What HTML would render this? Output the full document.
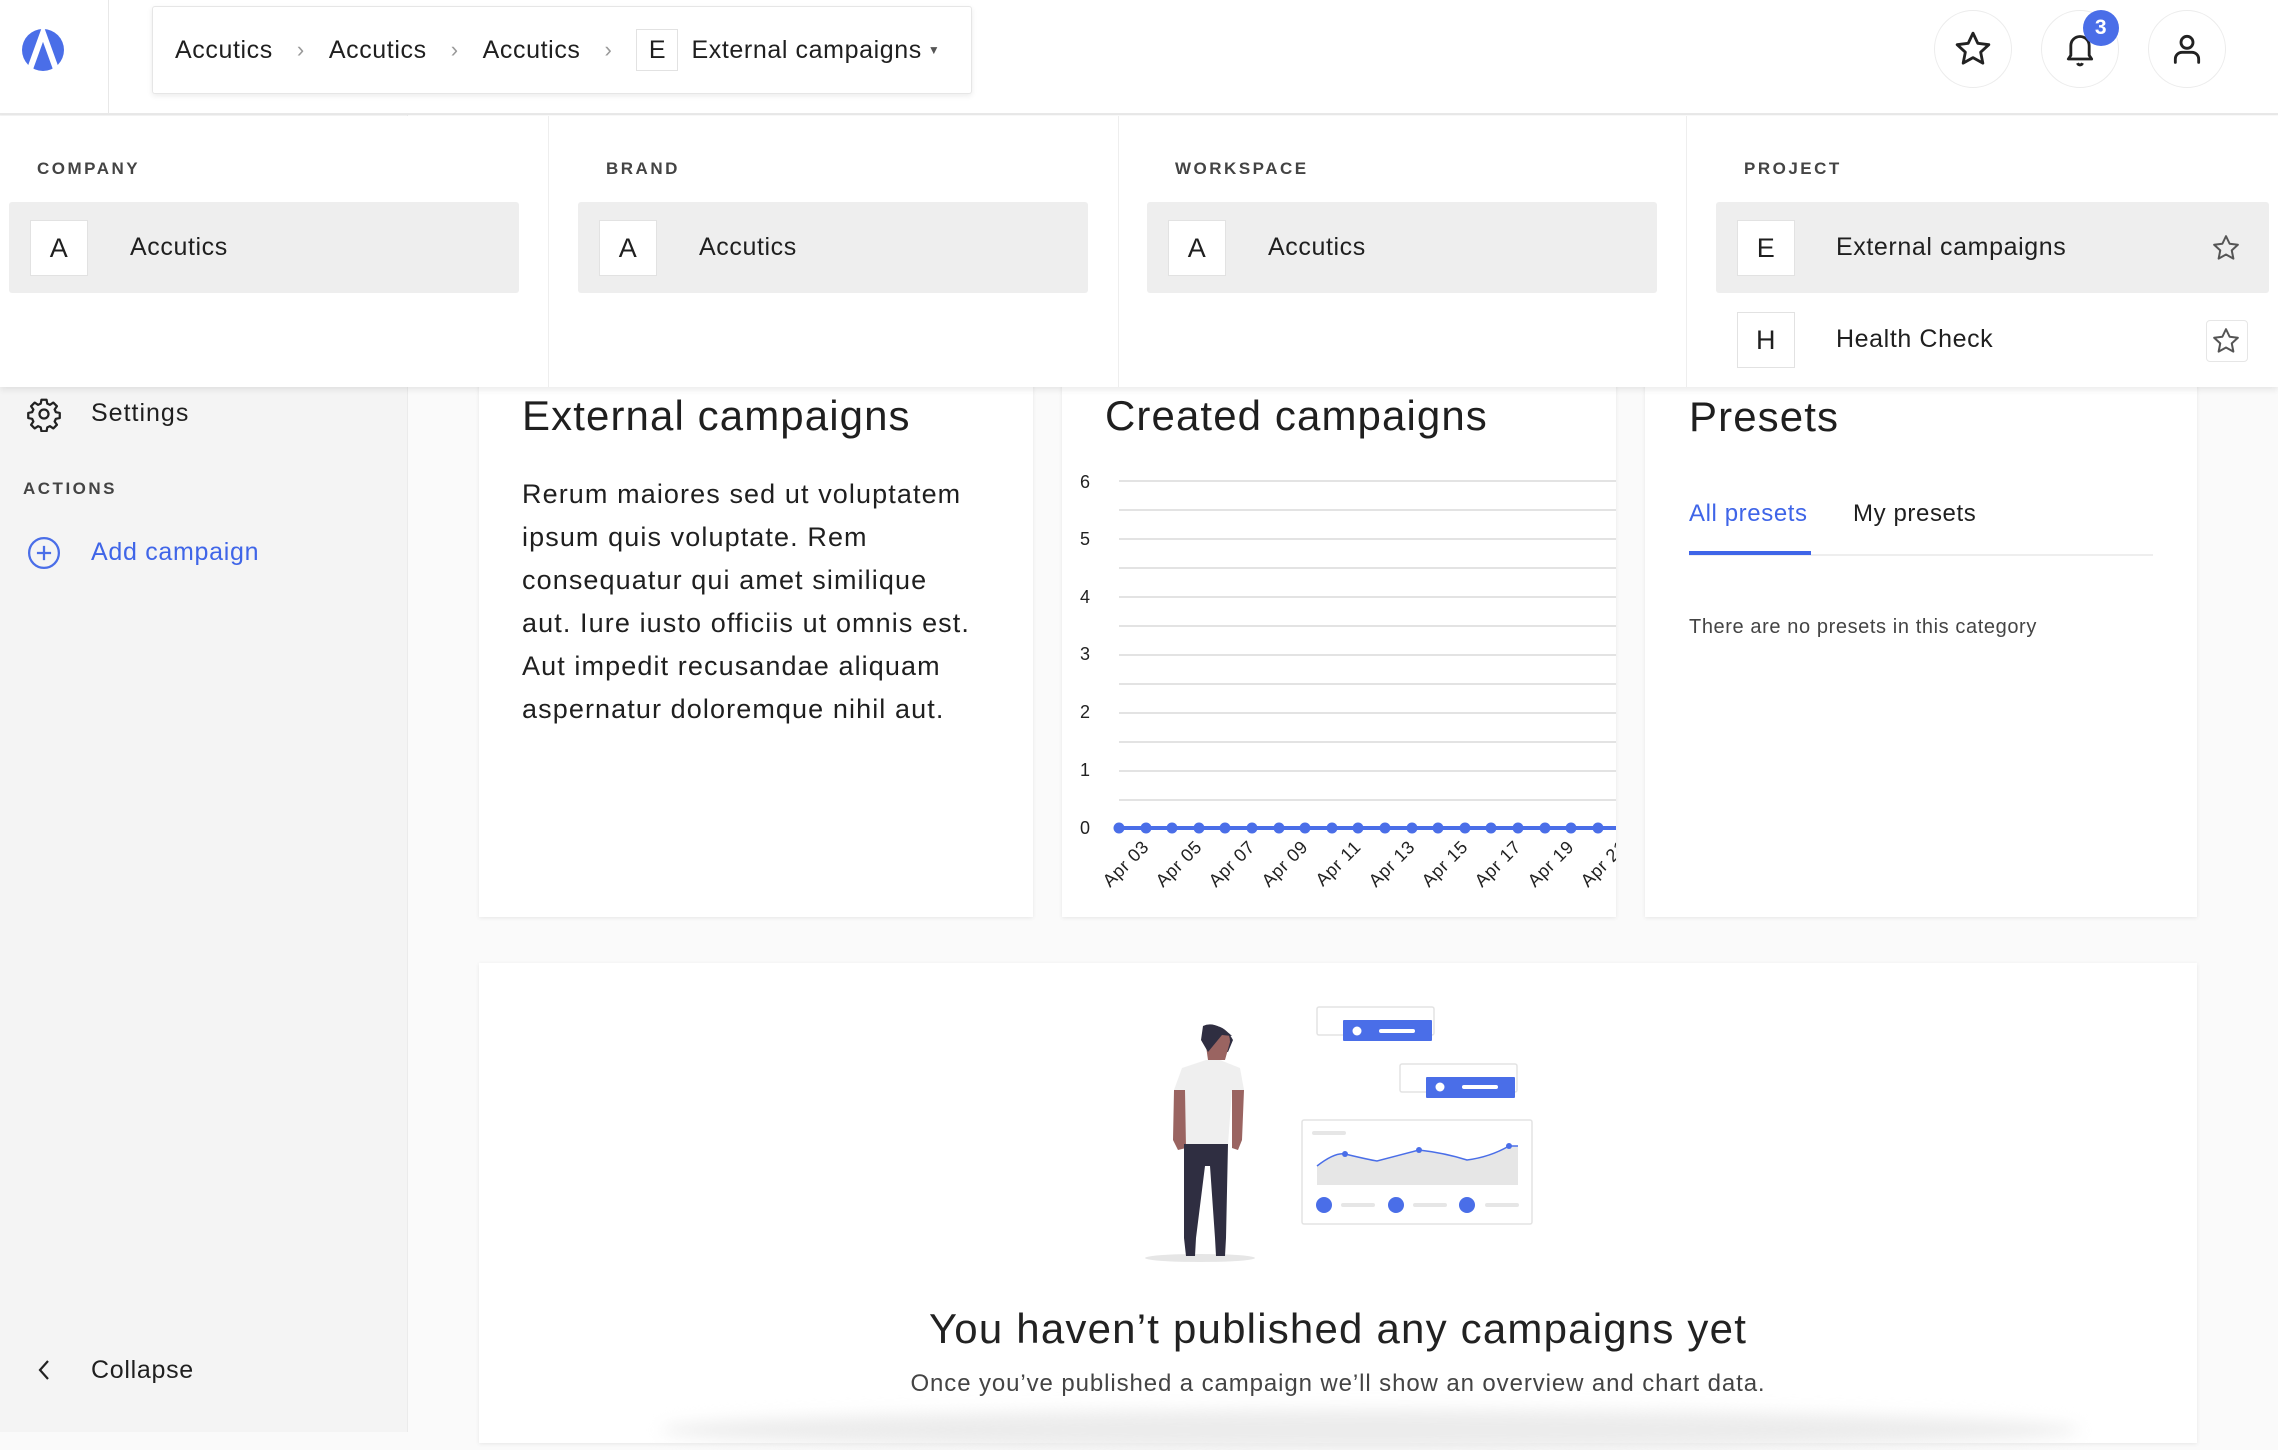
<!DOCTYPE html>
<html><head><meta charset="utf-8">
<style>
*{box-sizing:border-box;margin:0;padding:0}
body{width:2278px;height:1432px;overflow:hidden;background:#fafafa;font-family:"Liberation Sans",sans-serif;color:#1f1f1f;position:relative;letter-spacing:0.6px}
.a{position:absolute}
.side{left:0;top:115px;width:408px;height:1317px;background:#f4f4f4;border-right:1px solid #ebebeb}
.card{background:#fff;box-shadow:0 1px 4px rgba(0,0,0,.08)}
.lbl{font-size:17px;letter-spacing:2.5px;color:#444;font-weight:bold}
.item{background:#eee;border-radius:3px;height:91px}
.lt{width:58px;height:56px;background:#fff;border:1px solid #e2e2e2;font-size:27px;display:flex;align-items:center;justify-content:center}
.it{font-size:25px}
.h{font-size:42px;letter-spacing:1.1px}
.circ{width:78px;height:78px;border-radius:50%;border:1px solid #ececec;background:#fff;display:flex;align-items:center;justify-content:center}
.sep{color:#999;margin:0 24px;font-size:22px}
</style></head><body>
<!-- top bar -->
<div class="a" style="left:0;top:0;width:2278px;height:115px;background:#fff;border-bottom:2px solid #e8e8e8"></div>
<div class="a" style="left:108px;top:0;width:1px;height:115px;background:#e8e8e8"></div>
<svg class="a" style="left:20px;top:27px" width="46" height="46" viewBox="0 0 46 46"><circle cx="23" cy="23" r="21" fill="#4a6ee8"/><path d="M10 42 L23 6 L36 42" stroke="#fff" stroke-width="6" fill="none"/></svg>
<div class="a card" style="left:152px;top:6px;width:820px;height:88px;border:1px solid #e6e6e6;border-radius:3px;box-shadow:0 2px 6px rgba(0,0,0,.08)"></div>
<div class="a" style="left:175px;top:35px;font-size:25px;letter-spacing:0.6px;display:flex;align-items:center;height:30px;white-space:nowrap">
<span>Accutics</span><span class="sep">›</span><span>Accutics</span><span class="sep">›</span><span>Accutics</span><span class="sep">›</span>
<span style="width:42px;height:42px;border:1px solid #e2e2e2;display:inline-flex;align-items:center;justify-content:center;margin-right:13px">E</span><span>External campaigns</span><span style="font-size:12px;margin-left:6px;color:#555">▼</span></div>
<div class="a circ" style="left:1934px;top:10px"><svg width="40" height="40" viewBox="0 0 24 24"><path d="M12 2.5l2.9 6.1 6.6.8-4.9 4.5 1.3 6.6L12 17.2l-5.9 3.3 1.3-6.6-4.9-4.5 6.6-.8z" fill="none" stroke="#222" stroke-width="1.7" stroke-linejoin="round"/></svg></div>
<div class="a circ" style="left:2041px;top:10px"><svg width="40" height="40" viewBox="0 0 24 24"><path d="M5 18h14l-1.5-2.2V10a5.5 5.5 0 0 0-11 0v5.8z M10.5 20.5a1.6 1.6 0 0 0 3 0" fill="none" stroke="#222" stroke-width="1.7" stroke-linejoin="round"/></svg></div>
<div class="a" style="left:2083px;top:10px;width:36px;height:36px;border-radius:50%;background:#4a6ee8;color:#fff;font-weight:bold;font-size:21px;display:flex;align-items:center;justify-content:center">3</div>
<div class="a circ" style="left:2148px;top:10px"><svg width="40" height="40" viewBox="0 0 24 24"><circle cx="12" cy="8" r="3.6" fill="none" stroke="#222" stroke-width="1.7"/><path d="M5 20v-2a4 4 0 0 1 4-4h6a4 4 0 0 1 4 4v2" fill="none" stroke="#222" stroke-width="1.7" stroke-linecap="round"/></svg></div>

<!-- sidebar -->
<div class="a side"></div>
<svg class="a" style="left:26px;top:396px" width="36" height="36" viewBox="0 0 24 24"><path d="M10.3 2.5h3.4l.5 2.6 1.8.8 2.2-1.5 2.4 2.4-1.5 2.2.8 1.8 2.6.5v3.4l-2.6.5-.8 1.8 1.5 2.2-2.4 2.4-2.2-1.5-1.8.8-.5 2.6h-3.4l-.5-2.6-1.8-.8-2.2 1.5-2.4-2.4 1.5-2.2-.8-1.8-2.6-.5v-3.4l2.6-.5.8-1.8-1.5-2.2 2.4-2.4 2.2 1.5 1.8-.8z" fill="none" stroke="#222" stroke-width="1.5" stroke-linejoin="round"/><circle cx="12" cy="12" r="3" fill="none" stroke="#222" stroke-width="1.5"/></svg>
<div class="a" style="left:91px;top:399px;font-size:25px;letter-spacing:1px">Settings</div>
<div class="a lbl" style="left:23px;top:479px;font-size:17px">ACTIONS</div>
<svg class="a" style="left:27px;top:536px" width="34" height="34" viewBox="0 0 24 24"><circle cx="12" cy="12" r="10.5" fill="none" stroke="#4a6ee8" stroke-width="1.6"/><path d="M12 7v10M7 12h10" stroke="#4a6ee8" stroke-width="1.6"/></svg>
<div class="a" style="left:91px;top:538px;font-size:25px;letter-spacing:0.7px;color:#3f65e8">Add campaign</div>
<svg class="a" style="left:36px;top:1358px" width="16" height="24" viewBox="0 0 16 24"><path d="M12 3 L4 12 L12 21" fill="none" stroke="#222" stroke-width="2.2"/></svg>
<div class="a" style="left:91px;top:1356px;font-size:25px;letter-spacing:0.7px">Collapse</div>

<!-- cards -->
<div class="a card" style="left:479px;top:360px;width:554px;height:557px"></div>
<div class="a card" style="left:1062px;top:360px;width:554px;height:557px"></div>
<div class="a card" style="left:1645px;top:360px;width:552px;height:557px"></div>
<div class="a card" style="left:479px;top:963px;width:1718px;height:480px"></div>

<div class="a h" style="left:522px;top:392px">External campaigns</div>
<div class="a" style="left:522px;top:473px;width:520px;font-size:27px;line-height:43px;letter-spacing:1.1px;white-space:nowrap">Rerum maiores sed ut voluptatem<br>ipsum quis voluptate. Rem<br>consequatur qui amet similique<br>aut. Iure iusto officiis ut omnis est.<br>Aut impedit recusandae aliquam<br>aspernatur doloremque nihil aut.</div>

<div class="a h" style="left:1105px;top:392px">Created campaigns</div>
<svg class="a" style="left:1062px;top:460px" width="554" height="440" viewBox="1062 460 554 440" font-family="Liberation Sans" font-size="18" fill="#222">
<g stroke="#e3e3e3" stroke-width="2">
<line x1="1119" x2="1616" y1="481" y2="481"/><line x1="1119" x2="1616" y1="510" y2="510"/><line x1="1119" x2="1616" y1="539" y2="539"/><line x1="1119" x2="1616" y1="568" y2="568"/><line x1="1119" x2="1616" y1="597" y2="597"/><line x1="1119" x2="1616" y1="626" y2="626"/><line x1="1119" x2="1616" y1="655" y2="655"/><line x1="1119" x2="1616" y1="684" y2="684"/><line x1="1119" x2="1616" y1="713" y2="713"/><line x1="1119" x2="1616" y1="742" y2="742"/><line x1="1119" x2="1616" y1="771" y2="771"/><line x1="1119" x2="1616" y1="800" y2="800"/></g>
<text x="1080" y="488">6</text><text x="1080" y="545">5</text><text x="1080" y="603">4</text><text x="1080" y="660">3</text><text x="1080" y="718">2</text><text x="1080" y="776">1</text><text x="1080" y="834">0</text>
<line x1="1119" x2="1616" y1="828" y2="828" stroke="#4a6ee8" stroke-width="4"/>
<g fill="#4a6ee8">
<circle cx="1119" cy="828" r="5.5"/><circle cx="1146" cy="828" r="5.5"/><circle cx="1172" cy="828" r="5.5"/><circle cx="1199" cy="828" r="5.5"/><circle cx="1225" cy="828" r="5.5"/><circle cx="1252" cy="828" r="5.5"/><circle cx="1279" cy="828" r="5.5"/><circle cx="1305" cy="828" r="5.5"/><circle cx="1332" cy="828" r="5.5"/><circle cx="1358" cy="828" r="5.5"/><circle cx="1385" cy="828" r="5.5"/><circle cx="1412" cy="828" r="5.5"/><circle cx="1438" cy="828" r="5.5"/><circle cx="1465" cy="828" r="5.5"/><circle cx="1491" cy="828" r="5.5"/><circle cx="1518" cy="828" r="5.5"/><circle cx="1545" cy="828" r="5.5"/><circle cx="1571" cy="828" r="5.5"/><circle cx="1598" cy="828" r="5.5"/></g>
<g text-anchor="end">
<text transform="translate(1150,848) rotate(-45)">Apr 03</text><text transform="translate(1203,848) rotate(-45)">Apr 05</text><text transform="translate(1256,848) rotate(-45)">Apr 07</text><text transform="translate(1309,848) rotate(-45)">Apr 09</text><text transform="translate(1362,848) rotate(-45)">Apr 11</text><text transform="translate(1416,848) rotate(-45)">Apr 13</text><text transform="translate(1469,848) rotate(-45)">Apr 15</text><text transform="translate(1522,848) rotate(-45)">Apr 17</text><text transform="translate(1575,848) rotate(-45)">Apr 19</text><text transform="translate(1628,848) rotate(-45)">Apr 21</text></g>
</svg>

<div class="a h" style="left:1689px;top:393px">Presets</div>
<div class="a" style="left:1689px;top:500px;font-size:24px;color:#3f65e8">All presets</div>
<div class="a" style="left:1853px;top:500px;font-size:24px">My presets</div>
<div class="a" style="left:1689px;top:554px;width:464px;height:2px;background:#eee"></div>
<div class="a" style="left:1689px;top:551px;width:122px;height:4px;background:#3f65e8"></div>
<div class="a" style="left:1689px;top:616px;font-size:20px;color:#444">There are no presets in this category</div>

<!-- illustration -->
<svg class="a" style="left:1100px;top:980px" width="460" height="300" viewBox="0 0 460 300">
<ellipse cx="100" cy="278" rx="55" ry="4" fill="#e6e6e6"/>
<rect x="217" y="27" width="117" height="28" fill="#fff" stroke="#e3e3e3" stroke-width="1.5" rx="2"/>
<rect x="243" y="40" width="89" height="21" fill="#4a6ee8" rx="1"/><circle cx="257" cy="51" r="4.5" fill="#fff"/><rect x="279" y="49" width="36" height="4" rx="2" fill="#fff"/>
<rect x="300" y="84" width="117" height="28" fill="#fff" stroke="#e3e3e3" stroke-width="1.5" rx="2"/>
<rect x="326" y="97" width="89" height="21" fill="#4a6ee8" rx="1"/><circle cx="340" cy="107" r="4.5" fill="#fff"/><rect x="362" y="105" width="36" height="4" rx="2" fill="#fff"/>
<rect x="202" y="140" width="230" height="104" fill="#fff" stroke="#e3e3e3" stroke-width="1.5" rx="2"/>
<rect x="212" y="151" width="34" height="4" rx="2" fill="#e6e6e6"/>
<path d="M217 186 Q235 172 245 174 Q270 178 277 181 Q300 175 319 170 Q345 173 367 180 Q390 177 409 166 L418 166 L418 205 L217 205Z" fill="#e6e6e6"/>
<path d="M217 186 Q235 172 245 174 Q270 180 277 181 Q300 175 319 170 Q345 173 367 180 Q390 177 409 166 L418 166" fill="none" stroke="#4a6ee8" stroke-width="1.5"/>
<circle cx="245" cy="174" r="3" fill="#4a6ee8"/><circle cx="319" cy="170" r="3" fill="#4a6ee8"/><circle cx="409" cy="166" r="3" fill="#4a6ee8"/>
<circle cx="224" cy="225" r="8" fill="#4a6ee8"/><rect x="241" y="223" width="34" height="4" rx="2" fill="#e6e6e6"/>
<circle cx="296" cy="225" r="8" fill="#4a6ee8"/><rect x="313" y="223" width="34" height="4" rx="2" fill="#e6e6e6"/>
<circle cx="367" cy="225" r="8" fill="#4a6ee8"/><rect x="385" y="223" width="34" height="4" rx="2" fill="#e6e6e6"/>
<path d="M113 46 Q125 45 133 60 L128 72 L113 70 Z" fill="#2f2e41"/>
<path d="M106 66 Q104 52 113 47 Q130 47 130 62 L125 80 L108 80Z" fill="#9a6461"/>
<path d="M103 46 Q115 40 132 56 L122 55 L108 72 L101 60Z" fill="#2f2e41"/>
<path d="M106 80 L82 88 L74 110 L85 110 L85 164 L128 164 L132 110 L144 110 L140 88 L120 80Z" fill="#efefef"/>
<path d="M74 110 L73 160 L78 170 L86 168 L85 110Z M144 110 L142 160 L138 170 L132 168 L132 110Z" fill="#9a6461"/>
<path d="M84 164 L84 258 L86 276 L95 276 L96 258 L105 186 L110 186 L115 258 L116 276 L125 276 L126 258 L128 164Z" fill="#2f2e41"/>
</svg>
<div class="a" style="left:479px;top:1305px;width:1718px;text-align:center;font-size:42px;letter-spacing:1.2px;color:#222">You haven’t published any campaigns yet</div>
<div class="a" style="left:479px;top:1370px;width:1718px;text-align:center;font-size:24px;letter-spacing:0.9px;color:#444">Once you’ve published a campaign we’ll show an overview and chart data.</div>
<div class="a" style="left:660px;top:1410px;width:1420px;height:40px;border-radius:50%;background:#ececec;filter:blur(8px)"></div>

<!-- dropdown panel -->
<div class="a" style="left:0;top:116px;width:2278px;height:271px;background:#fff;box-shadow:0 3px 6px rgba(0,0,0,.08)"></div>
<div class="a" style="left:548px;top:116px;width:1px;height:271px;background:#eee"></div>
<div class="a" style="left:1118px;top:116px;width:1px;height:271px;background:#eee"></div>
<div class="a" style="left:1686px;top:116px;width:1px;height:271px;background:#eee"></div>
<div class="a lbl" style="left:37px;top:159px">COMPANY</div>
<div class="a lbl" style="left:606px;top:159px">BRAND</div>
<div class="a lbl" style="left:1175px;top:159px">WORKSPACE</div>
<div class="a lbl" style="left:1744px;top:159px">PROJECT</div>
<div class="a item" style="left:9px;top:202px;width:510px"></div>
<div class="a item" style="left:578px;top:202px;width:510px"></div>
<div class="a item" style="left:1147px;top:202px;width:510px"></div>
<div class="a item" style="left:1716px;top:202px;width:553px"></div>
<div class="a lt" style="left:30px;top:220px">A</div><div class="a it" style="left:130px;top:233px">Accutics</div>
<div class="a lt" style="left:599px;top:220px">A</div><div class="a it" style="left:699px;top:233px">Accutics</div>
<div class="a lt" style="left:1168px;top:220px">A</div><div class="a it" style="left:1268px;top:233px">Accutics</div>
<div class="a lt" style="left:1737px;top:220px">E</div><div class="a it" style="left:1836px;top:233px">External campaigns</div>
<div class="a lt" style="left:1737px;top:312px">H</div><div class="a it" style="left:1836px;top:325px">Health Check</div>
<svg class="a" style="left:2211px;top:233px" width="30" height="30" viewBox="0 0 24 24"><path d="M12 2.5l2.9 6.1 6.6.8-4.9 4.5 1.3 6.6L12 17.2l-5.9 3.3 1.3-6.6-4.9-4.5 6.6-.8z" fill="none" stroke="#555" stroke-width="1.6" stroke-linejoin="round"/></svg>
<div class="a" style="left:2206px;top:320px;width:42px;height:42px;border:1px solid #e6e6e6;border-radius:4px"></div>
<svg class="a" style="left:2211px;top:326px" width="30" height="30" viewBox="0 0 24 24"><path d="M12 2.5l2.9 6.1 6.6.8-4.9 4.5 1.3 6.6L12 17.2l-5.9 3.3 1.3-6.6-4.9-4.5 6.6-.8z" fill="none" stroke="#555" stroke-width="1.6" stroke-linejoin="round"/></svg>
</body></html>
